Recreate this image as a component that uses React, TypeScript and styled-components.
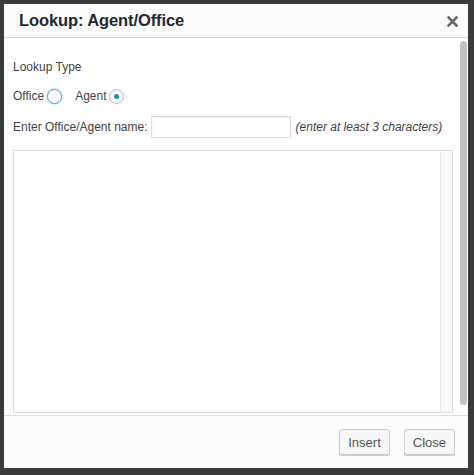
import styled, { createGlobalStyle } from "styled-components";

const GlobalStyle = createGlobalStyle`
  html, body {
    margin: 0;
    padding: 0;
    background: #3a3a3a;
  }
  * {
    box-sizing: border-box;
  }
`;

export default function App() {
  return (
    <>
      <GlobalStyle />
      <St.Backdrop>
        <St.Dialog>
          <St.Header>
            <St.Title>Lookup: Agent/Office</St.Title>
            <St.CloseX aria-label="Close">
              <svg width="11" height="11" viewBox="0 0 11 11">
                <path d="M1.5 1.5 L9.5 9.5 M9.5 1.5 L1.5 9.5" stroke="#666" strokeWidth="2.6" strokeLinecap="square" />
              </svg>
            </St.CloseX>
          </St.Header>

          <St.Body>
            <St.Content>
              <St.Label>Lookup Type</St.Label>
              <St.RadioRow>
                <St.RadioLabel>Office</St.RadioLabel>
                <St.Radio $focused />
                <St.RadioLabel $gap>Agent</St.RadioLabel>
                <St.Radio $checked />
              </St.RadioRow>
              <St.InputRow>
                <St.RadioLabel>Enter Office/Agent name:</St.RadioLabel>
                <St.NameInput type="text" />
                <St.Hint>(enter at least 3 characters)</St.Hint>
              </St.InputRow>
              <St.Results>
                <St.ResultsTrack />
              </St.Results>
            </St.Content>
            <St.ScrollBar>
              <St.Thumb />
            </St.ScrollBar>
          </St.Body>

          <St.Footer>
            <St.Button>Insert</St.Button>
            <St.Button>Close</St.Button>
          </St.Footer>
        </St.Dialog>
      </St.Backdrop>
    </>
  );
}

const St = {
  Backdrop: styled.div`
    width: 474px;
    height: 475px;
    padding: 4px 6px 7px 4px;
    background: #3a3a3a;
  `,
  Dialog: styled.div`
    width: 464px;
    height: 464px;
    background: #fff;
    display: flex;
    flex-direction: column;
    font-family: "Liberation Sans", Arial, sans-serif;
    color: #444;
  `,
  Header: styled.div`
    height: 34px;
    flex: none;
    display: flex;
    align-items: center;
    justify-content: space-between;
    padding: 0 10px 0 15px;
    background: #fcfcfc;
    border-bottom: 1px solid #ddd;
  `,
  Title: styled.h1`
    margin: 0;
    font-size: 16.5px;
    font-weight: 700;
    color: #23282d;
    letter-spacing: -0.1px;
  `,
  CloseX: styled.span`
    display: flex;
    width: 11px;
    height: 11px;
    margin-top: 2px;
  `,
  Body: styled.div`
    flex: 1;
    display: flex;
    min-height: 0;
  `,
  Content: styled.div`
    flex: 1;
    display: flex;
    flex-direction: column;
    padding: 0 0 2px 9px;
    font-size: 12px;
  `,
  Label: styled.div`
    margin-top: 22px;
    height: 14px;
    line-height: 14px;
  `,
  RadioRow: styled.div`
    display: flex;
    align-items: center;
    margin-top: 14px;
    height: 16px;
  `,
  RadioLabel: styled.span<{ $gap?: boolean }>`
    line-height: 14px;
    margin-left: ${({ $gap }) => ($gap ? "13px" : "0")};
    white-space: nowrap;
  `,
  Radio: styled.span<{ $checked?: boolean; $focused?: boolean }>`
    width: 15px;
    height: 15px;
    margin-left: 3px;
    border-radius: 50%;
    border: 1px solid ${({ $focused }) => ($focused ? "#5b9dd9" : "#b4b9be")};
    box-shadow: ${({ $focused }) =>
      $focused ? "0 0 2px rgba(30, 140, 190, 0.6)" : "inset 0 1px 2px rgba(0, 0, 0, 0.1)"};
    background: #fff;
    display: flex;
    align-items: center;
    justify-content: center;

    &::after {
      content: "";
      display: ${({ $checked }) => ($checked ? "block" : "none")};
      width: 5px;
      height: 5px;
      border-radius: 50%;
      background: #1e8cbe;
    }
  `,
  InputRow: styled.div`
    display: flex;
    align-items: center;
    margin-top: 12px;
    height: 22px;
  `,
  NameInput: styled.input`
    width: 140px;
    height: 22px;
    margin: 0 0 0 3px;
    padding: 0 4px;
    border: 1px solid #ddd;
    box-shadow: inset 0 1px 2px rgba(0, 0, 0, 0.07);
    background: #fff;
    outline: none;
  `,
  Hint: styled.span`
    margin-left: 5px;
    font-style: italic;
    white-space: nowrap;
  `,
  Results: styled.div`
    flex: 1;
    margin-top: 12px;
    border: 1px solid #ddd;
    display: flex;
    justify-content: flex-end;
  `,
  ResultsTrack: styled.div`
    width: 12px;
    border-left: 1px solid #e8e8e8;
    background: #fafafa;
  `,
  ScrollBar: styled.div`
    width: 15px;
    flex: none;
    padding: 3px 1px 10px 7px;
    display: flex;
  `,
  Thumb: styled.div`
    flex: 1;
    border-radius: 4px;
    background: #c1c1c1;
  `,
  Footer: styled.div`
    height: 53px;
    flex: none;
    display: flex;
    align-items: center;
    justify-content: flex-end;
    gap: 14px;
    padding: 0 13px 0 0;
    background: #fcfcfc;
    border-top: 1px solid #ddd;
  `,
  Button: styled.button`
    height: 26px;
    min-width: 50px;
    padding: 0 8px;
    font-family: "Liberation Sans", Arial, sans-serif;
    font-size: 13px;
    color: #555;
    background: #f7f7f7;
    border: 1px solid #ccc;
    border-radius: 3px;
    box-shadow: 0 1px 0 #ccc;
    cursor: pointer;
  `,
};
